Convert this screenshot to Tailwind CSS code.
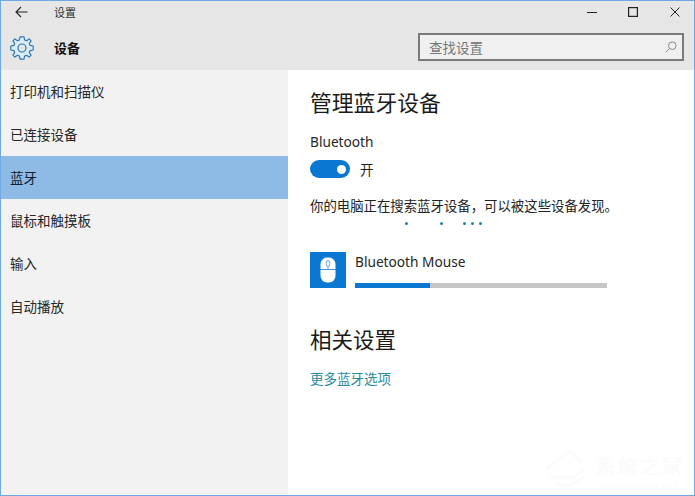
<!DOCTYPE html>
<html lang="zh">
<head>
<meta charset="utf-8">
<script src="https://cdn.jsdelivr.net/npm/@tailwindcss/browser@4"></script>
</head>
<body class="m-0">
<div class="relative w-[695px] h-[496px] overflow-hidden bg-white border border-[#6fa8e2] flex flex-col text-[#1f1f1f] font-['Noto_Sans_CJK_SC','Noto_Sans',sans-serif]">
  <header class="h-[69px] shrink-0 bg-[#e6e6e6] flex flex-col">
    <div class="h-[22px] flex items-center">
      <svg class="ml-[14px] w-[13px] h-[12px]" viewBox="0 0 13 12" fill="none" stroke="#222" stroke-width="1.1"><path d="M12.500 6H1M6 1 1 6l5 5"/></svg>
      <span class="ml-[26px] text-[11px] text-[#333]">设置</span>
      <div class="ml-auto flex items-center h-full">
        <svg class="w-[10px] h-[10px]" viewBox="0 0 10 10" stroke="#222" fill="none"><path d="M0 5.500h10"/></svg>
        <svg class="ml-[31px] w-[10px] h-[10px]" viewBox="0 0 10 10" stroke="#222" fill="none" stroke-width="1.2"><rect x=".6" y=".6" width="8.800" height="8.800"/></svg>
        <svg class="ml-[32px] mr-[14px] w-[10px] h-[10px]" viewBox="0 0 10 10" stroke="#222" fill="none" stroke-width="1"><path d="m.5.5 9 9m0-9-9 9"/></svg>
      </div>
    </div>
    <div class="flex items-center h-[47px] pt-[2px]">
      <svg class="ml-[9px] w-[24px] h-[24px]" viewBox="0 0 24 24" fill="#dcecf6" stroke="#2f78b0" stroke-width="1.2" stroke-linejoin="round"><path d="M10 .8h4l.6 3.100 1.900.8 2.600-1.800 2 2-1.800 2.600.8 1.900 3.100.6v4l-3.100.6-.8 1.900 1.800 2.600-2 2-2.600-1.800-1.900.8-.6 3.100h-4l-.6-3.100-1.900-.8-2.600 1.800-2-2 1.800-2.600-.8-1.900-3.100-.6v-4l3.100-.6.8-1.900-1.800-2.600 2-2 2.600 1.800 1.900-.8z"/><circle cx="12" cy="12" r="4" fill="#e6e6e6"/></svg>
      <span class="ml-[20px] text-[13px] font-bold text-[#111]">设备</span>
      <div class="ml-auto mr-[10px] w-[266px] h-[28px] -mt-[1px] border-2 border-[#7b7b7b] bg-[#f0f0f0] flex items-center justify-between pl-[9px] pr-[5px]">
        <span class="text-[13.500px] text-[#777]">查找设置</span>
        <svg class="w-[12px] h-[12px]" viewBox="0 0 12 12" fill="none" stroke="#8a8a8a"><circle cx="7.300" cy="4.700" r="3.800"/><path d="M4.600 7.400.8 11.200"/></svg>
      </div>
    </div>
  </header>
  <div class="flex flex-1 min-h-0">
    <nav class="w-[287px] shrink-0 bg-[#f2f2f2] text-[13.500px] text-[#262626]">
      <div class="h-[43px] flex items-center pl-[9px]">打印机和扫描仪</div>
      <div class="h-[43px] flex items-center pl-[9px]">已连接设备</div>
      <div class="h-[43px] flex items-center pl-[9px] bg-[#8dbbe6] text-[#10202e]">蓝牙</div>
      <div class="h-[43px] flex items-center pl-[9px]">鼠标和触摸板</div>
      <div class="h-[43px] flex items-center pl-[9px]">输入</div>
      <div class="h-[43px] flex items-center pl-[9px]">自动播放</div>
    </nav>
    <main class="flex-1 pl-[22px] flex flex-col items-start">
      <h1 class="mt-[16px] h-[31px] leading-[31px] text-[21.800px] font-normal text-[#1a1a1a]">管理蓝牙设备</h1>
      <div class="mt-[14px] h-[22px] leading-[22px] text-[13.700px] font-['Noto_Sans',sans-serif] text-[#262626]">Bluetooth</div>
      <div class="mt-[6px] h-[20px] flex items-center">
        <div class="w-[40px] h-[18px] rounded-full bg-[#0a78d2] flex items-center justify-end pr-[4px]"><span class="w-[9px] h-[9px] rounded-full bg-white"></span></div>
        <span class="ml-[10px] text-[13.500px] text-[#222]">开</span>
      </div>
      <p class="mt-[15px] h-[22px] leading-[22px] text-[13.400px] text-[#222] whitespace-nowrap">你的电脑正在搜索蓝牙设备，可以被这些设备发现。</p>
      <div class="mt-[5px] h-[4px] flex items-center">
        <span class="ml-[95px] w-[3px] h-[3px] rounded-full bg-[#1f7fb8]"></span>
        <span class="ml-[32px] w-[3px] h-[3px] rounded-full bg-[#1f7fb8]"></span>
        <span class="ml-[20px] w-[3px] h-[3px] rounded-full bg-[#1f7fb8]"></span>
        <span class="ml-[5px] w-[3px] h-[3px] rounded-full bg-[#1f7fb8]"></span>
        <span class="ml-[5px] w-[3px] h-[3px] rounded-full bg-[#1f7fb8]"></span>
      </div>
      <div class="mt-[27px] flex">
        <div class="w-[36px] h-[36px] bg-[#0a78d2] flex items-center justify-center">
          <svg class="w-[16px] h-[26px]" viewBox="0 0 16 26"><path d="M8 .5C3.500.5.5 3 .5 8v10c0 5 3 7.500 7.500 7.500s7.500-2.500 7.500-7.500V8C15.500 3 12.500.5 8 .5z" fill="#fff"/><path d="M0 12.500h16" stroke="#0a78d2" stroke-width=".8"/><rect x="6.300" y="3.500" width="3.400" height="6" rx="1.700" fill="none" stroke="#4a90c8" stroke-width=".8"/><path d="M8 9.500v3" stroke="#4a90c8" stroke-width=".8"/></svg>
        </div>
        <div class="ml-[9px] w-[252px] h-[36px] flex flex-col justify-between">
          <span class="leading-[20px] text-[13.700px] font-['Noto_Sans',sans-serif] text-[#262626]">Bluetooth Mouse</span>
          <div class="h-[5px] bg-[#c6c6c6]"><div class="h-full w-[75px] bg-[#0a78d2]"></div></div>
        </div>
      </div>
      <h2 class="mt-[35px] h-[31px] leading-[31px] text-[21.500px] font-normal text-[#1a1a1a]">相关设置</h2>
      <a class="mt-[13px] h-[22px] leading-[22px] text-[13.500px] text-[#2a8a9e]">更多蓝牙选项</a>
    </main>
  </div>
  <div class="absolute right-[10px] bottom-[4px] flex items-end text-[#fbfbfb]">
    <svg class="w-[48px] h-[46px] mr-[4px]" viewBox="0 0 48 46" fill="none" stroke="#fbfbfb" stroke-width="3"><path d="M2 24 26 6l12 12M6 32h24l10-8M12 40h16l12-8"/></svg>
    <div class="flex flex-col items-center">
      <span class="text-[20px] leading-[26px] font-bold tracking-[2px]">系统之家</span>
      <span class="mt-[3px] text-[7px] leading-[9px] font-['Noto_Sans',sans-serif] tracking-[1px]">XITONGZHIJIA.NET</span>
    </div>
  </div>
</div>
</body>
</html>
